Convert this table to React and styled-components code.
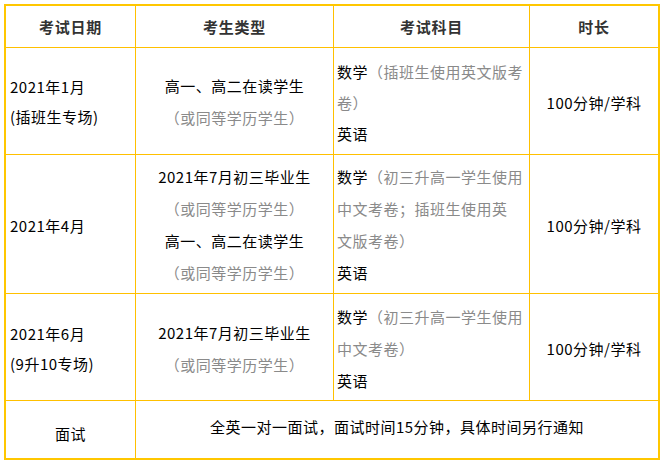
import React from "react";
import styled, { createGlobalStyle } from "styled-components";

const Global = createGlobalStyle`
  html, body { margin: 0; padding: 0; background: #fff; }
  body {
    padding: 4px 0 0 4px;
    font-family: "Noto Sans CJK SC", "Noto Sans", sans-serif;
    color: #000;
  }
`;

const Table = styled.div`
  display: grid;
  grid-template-columns: 130px 198px 196px 128px;
  grid-template-rows: 42px 107px 139px 107px 57px;
  width: 652px;
  border: 2px solid #ffc700;
`;

const Cell = styled.div`
  background: #fff;
  display: flex;
  flex-direction: column;
  justify-content: center;
  align-items: ${(p) => (p.$align === "left" ? "flex-start" : "center")};
  padding: ${(p) => p.$pad || "0"};
  font-size: 15px;
  letter-spacing: 0.5px;
  white-space: nowrap;
  grid-column: ${(p) => p.$span || "auto"};
  border-right: ${(p) => (p.$lastCol ? "none" : "1px solid #ffc000")};
  border-bottom: ${(p) => (p.$lastRow ? "none" : "1px solid #ffc000")};
`;

const Head = styled(Cell)`
  font-weight: 700;
  color: #333;
  letter-spacing: 0.8px;
`;

const Line = styled.div`
  line-height: ${(p) => p.$lh || 32}px;
  color: ${(p) => (p.$muted ? "#8a8a8a" : "#000")};
`;

const Muted = styled.span`
  color: #8a8a8a;
`;

export default function App() {
  return (
    <>
      <Global />
      <Table>
        <Head>考试日期</Head>
        <Head>考生类型</Head>
        <Head>考试科目</Head>
        <Head $lastCol>时长</Head>

        <Cell $align="left" $pad="2px 0 0 4px">
          <Line $lh={30}>2021年1月</Line>
          <Line $lh={30}>(插班生专场)</Line>
        </Cell>
        <Cell $pad="2px 0 0 0">
          <Line>高一、高二在读学生</Line>
          <Line $muted>（或同等学历学生）</Line>
        </Cell>
        <Cell $align="left" $pad="2px 0 0 3px">
          <Line $lh={31}>
            数学<Muted>（插班生使用英文版考</Muted>
          </Line>
          <Line $lh={31} $muted>卷）</Line>
          <Line $lh={31}>英语</Line>
        </Cell>
        <Cell $lastCol $pad="4px 0 0 0">
          <Line>100分钟/学科</Line>
        </Cell>

        <Cell $align="left" $pad="3px 0 0 4px">
          <Line>2021年4月</Line>
        </Cell>
        <Cell $pad="2px 0 0 0">
          <Line>2021年7月初三毕业生</Line>
          <Line $muted>（或同等学历学生）</Line>
          <Line>高一、高二在读学生</Line>
          <Line $muted>（或同等学历学生）</Line>
        </Cell>
        <Cell $align="left" $pad="2px 0 0 3px">
          <Line>
            数学<Muted>（初三升高一学生使用</Muted>
          </Line>
          <Line $muted>中文考卷；插班生使用英</Line>
          <Line $muted>文版考卷）</Line>
          <Line>英语</Line>
        </Cell>
        <Cell $lastCol $pad="3px 0 0 0">
          <Line>100分钟/学科</Line>
        </Cell>

        <Cell $align="left" $pad="3px 0 0 4px">
          <Line $lh={30}>2021年6月</Line>
          <Line $lh={30}>(9升10专场)</Line>
        </Cell>
        <Cell $pad="3px 0 0 0">
          <Line>2021年7月初三毕业生</Line>
          <Line $muted>（或同等学历学生）</Line>
        </Cell>
        <Cell $align="left" $pad="3px 0 0 3px">
          <Line>
            数学<Muted>（初三升高一学生使用</Muted>
          </Line>
          <Line $muted>中文考卷）</Line>
          <Line>英语</Line>
        </Cell>
        <Cell $lastCol $pad="4px 0 0 0">
          <Line>100分钟/学科</Line>
        </Cell>

        <Cell $lastRow $pad="9px 0 0 0">
          <Line>面试</Line>
        </Cell>
        <Cell $lastRow $lastCol $span="2 / span 3" $pad="0 0 5px 0">
          <Line>全英一对一面试，面试时间15分钟，具体时间另行通知</Line>
        </Cell>
      </Table>
    </>
  );
}
